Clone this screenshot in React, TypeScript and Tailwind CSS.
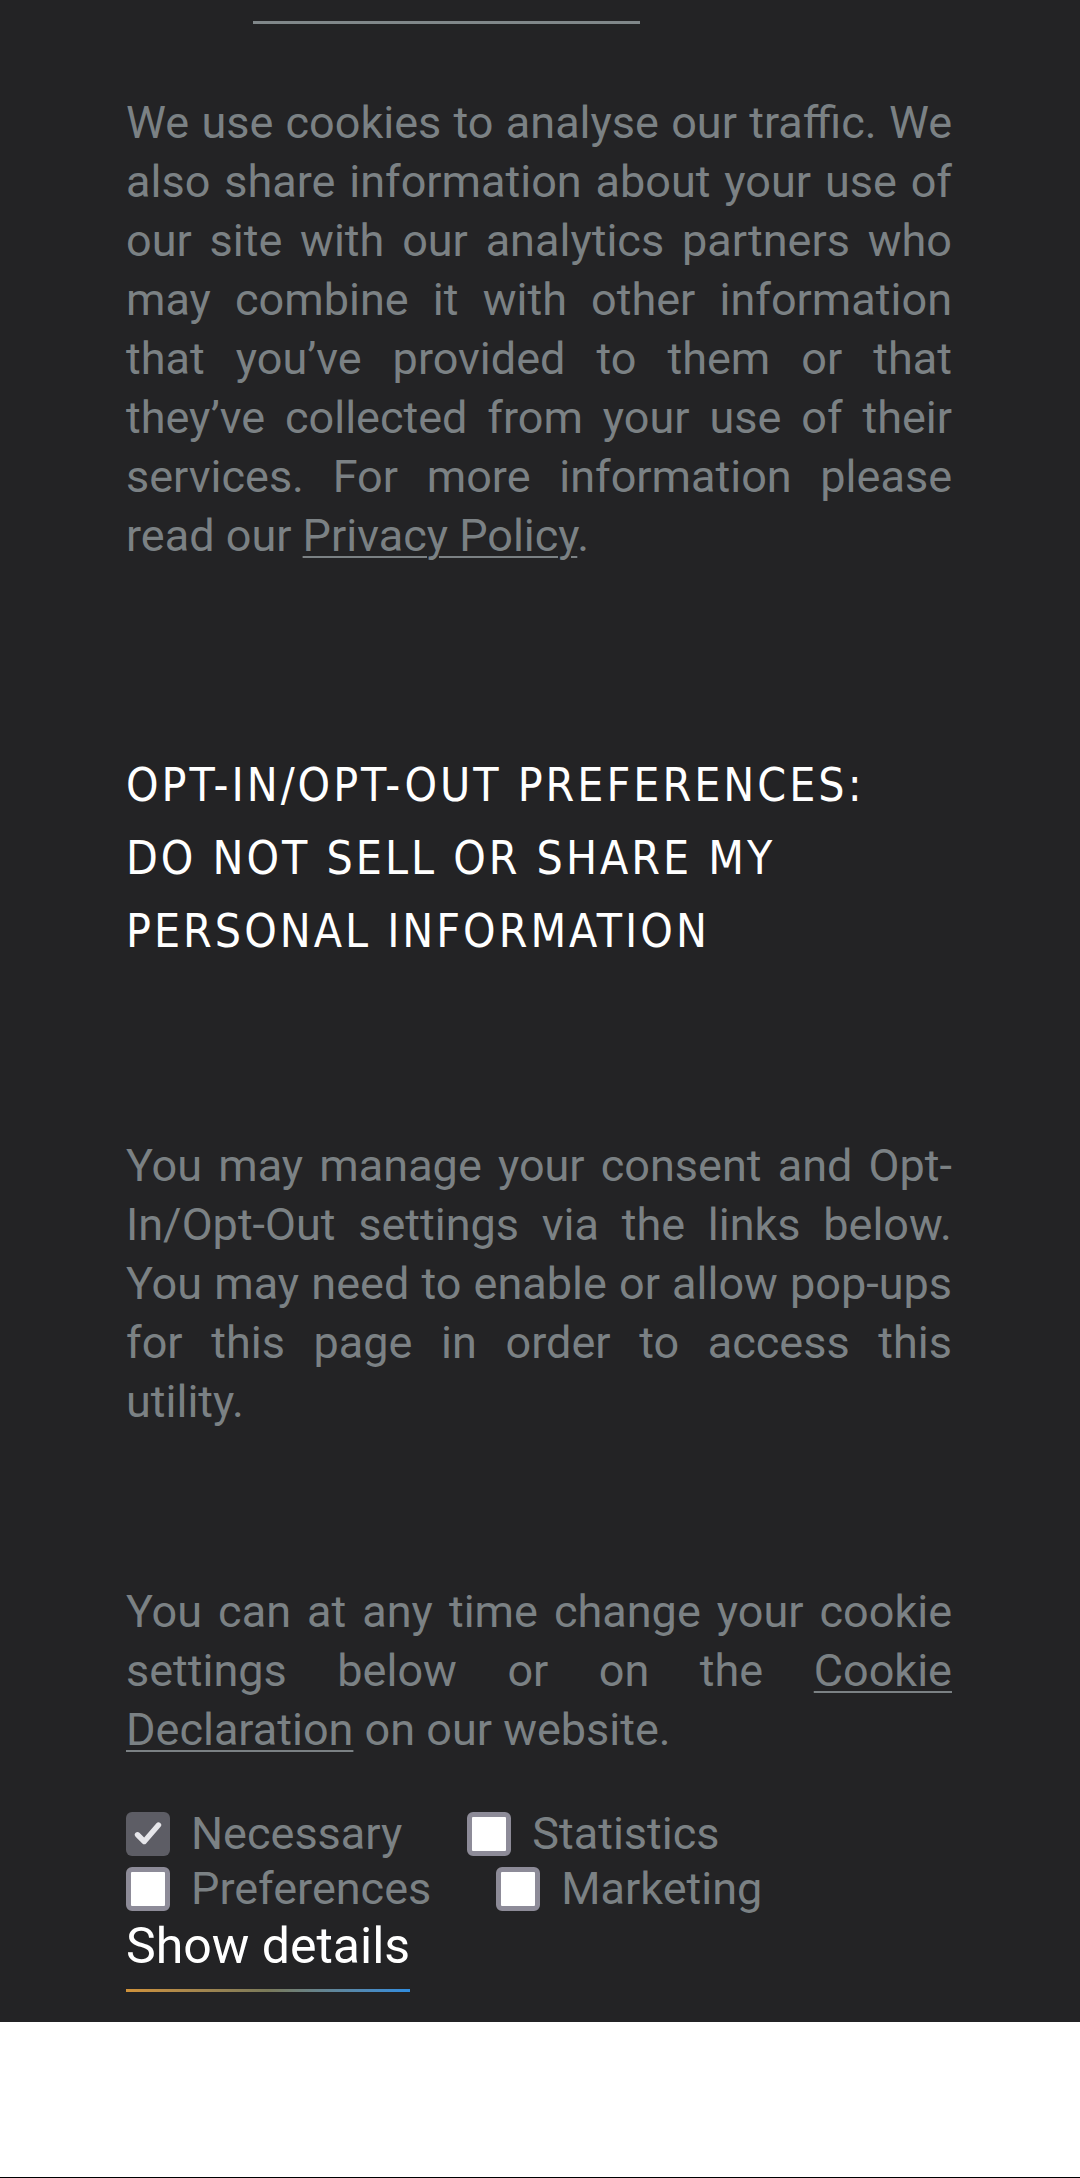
import { useState } from "react";

// Cookie consent panel (dark), with category checkboxes and a "Show details" link.
const categories = [
  { id: "necessary", label: "Necessary", locked: true },
  { id: "preferences", label: "Preferences", locked: false },
  { id: "statistics", label: "Statistics", locked: false },
  { id: "marketing", label: "Marketing", locked: false },
];

function Box({ checked, locked }: { checked: boolean; locked: boolean }) {
  if (checked && locked) {
    return (
      <span className="flex h-[44px] w-[44px] shrink-0 items-center justify-center rounded-[6px] bg-[#5d5d65]">
        <svg viewBox="0 0 24 24" className="h-[36px] w-[36px]" fill="none" stroke="#e6e6ea" strokeWidth="3.6" strokeLinecap="round" strokeLinejoin="round">
          <path d="M5 12.5l4.5 4.5L19 6" />
        </svg>
      </span>
    );
  }
  return (
    <span className="flex h-[44px] w-[44px] shrink-0 items-center justify-center rounded-[6px] border-[5px] border-[#8d8b98] bg-white">
      {checked && (
        <svg viewBox="0 0 24 24" className="h-[30px] w-[30px]" fill="none" stroke="#5d5d65" strokeWidth="3.6" strokeLinecap="round" strokeLinejoin="round">
          <path d="M5 12.5l4.5 4.5L19 6" />
        </svg>
      )}
    </span>
  );
}

export default function App() {
  const [state, setState] = useState<Record<string, boolean>>({
    necessary: true,
    preferences: false,
    statistics: false,
    marketing: false,
  });

  // visual order in the picture: Necessary, Statistics / Preferences, Marketing
  const order = ["necessary", "statistics", "preferences", "marketing"];

  return (
    <div className="flex min-h-[2178px] flex-col bg-white font-['Roboto',sans-serif]">
      <div className="bg-[#232325] pb-[30px] pl-[126px] pr-[128px] pt-[21px]">
        <div className="ml-[127px] h-[3px] w-[387px] bg-[#80878a]" />

        <p className="mt-[69px] text-justify text-[45px] leading-[59px] text-[#7b8184]">
          We use cookies to analyse our traffic. We also share information about your use of our site with our analytics
          partners who may combine it with other information that you’ve provided to them or that they’ve collected from
          your use of their services. For more information please read our{" "}
          <a href="#" className="underline decoration-[2px] underline-offset-[5px]">
            Privacy Policy
          </a>
          .
        </p>

        <h2 className="mt-[184px] font-['DejaVu_Sans_Condensed','DejaVu_Sans',sans-serif] text-[46px] uppercase leading-[73px] tracking-[3px] text-white">
          Opt-in/Opt-out Preferences:
          <br />
          Do not sell or share my personal information
        </h2>

        <p className="mt-[168px] text-justify text-[45px] leading-[59px] text-[#7b8184]">
          You may manage your consent and Opt-In/Opt-Out settings via the links below. You may need to enable or allow
          pop-ups for this page in order to access this utility.
        </p>

        <p className="mt-[151px] text-justify text-[45px] leading-[59px] text-[#7b8184]">
          You can at any time change your cookie settings below or on the{" "}
          <a href="#" className="underline decoration-[2px] underline-offset-[5px]">
            Cookie Declaration
          </a>{" "}
          on our website.
        </p>

        <div className="mt-[53px] flex flex-wrap gap-y-[11px]">
          {order.map((id) => {
            const c = categories.find((x) => x.id === id)!;
            return (
              <label
                key={id}
                className="mr-[65px] flex h-[44px] cursor-pointer items-center gap-[21px]"
                onClick={() => !c.locked && setState((s) => ({ ...s, [id]: !s[id] }))}
              >
                <Box checked={state[id]} locked={c.locked} />
                <span className="text-[45px] leading-[44px] text-[#7b8184]">{c.label}</span>
              </label>
            );
          })}
        </div>

        <a href="#" className="mt-[6px] inline-block">
          <span className="block text-[50px] leading-[58px] text-white">Show details</span>
          <span className="mt-[14px] block h-[3px] bg-gradient-to-r from-[#d0923a] via-[#7a7a5a] to-[#2f8de0]" />
        </a>
      </div>
      <div className="flex-1" />
      <div className="h-px bg-black" />
    </div>
  );
}
